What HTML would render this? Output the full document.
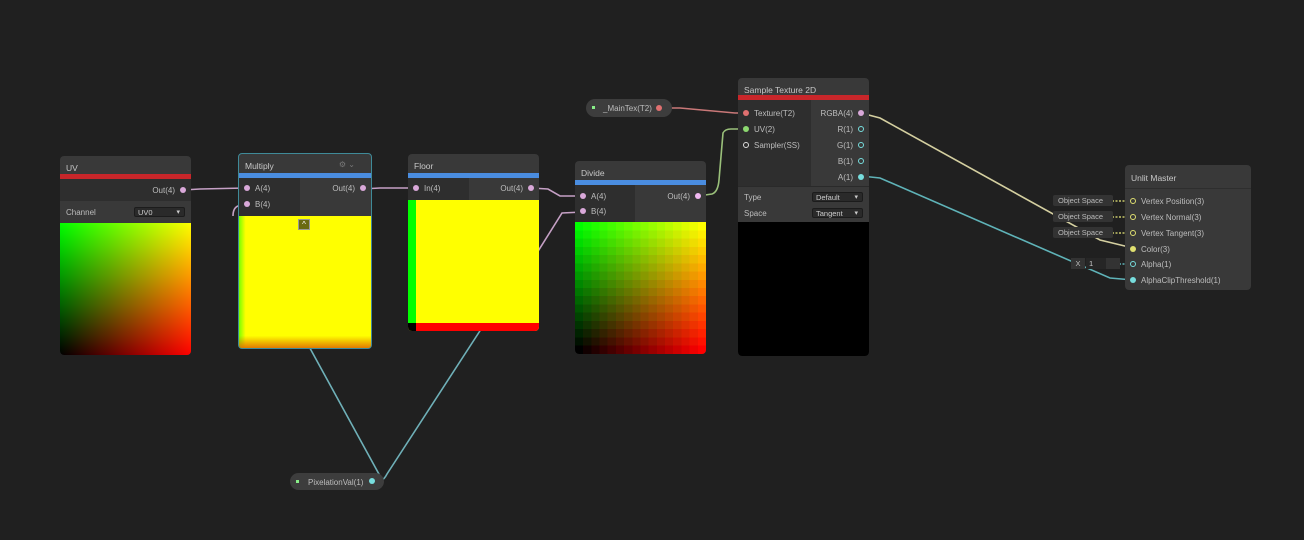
<!DOCTYPE html>
<html><head><meta charset="utf-8"><style>
*{margin:0;padding:0;box-sizing:border-box}
body{width:1304px;height:540px;background:#202020;position:relative;overflow:hidden;font-family:"Liberation Sans",sans-serif;font-size:8px;color:#c4c4c4}
.n{position:absolute;background:#393939;border-radius:4px;overflow:hidden}
.t{position:absolute;left:6px;font-size:8.5px;color:#c8c8c8}
.bar{position:absolute;left:0;right:0;height:5px}
.ports{position:absolute;background:#2e2e2e}
.lbl{position:absolute;font-size:8px;color:#bdbdbd;white-space:nowrap}
.dot{position:absolute;width:6px;height:6px;border-radius:50%}
.pv{position:absolute;left:0;right:0}
.dd{position:absolute;background:#2a2a2a;border:1px solid #1c1c1c;border-radius:2px;font-size:7.5px;color:#ccc;padding-left:3px;line-height:9px}
.dd:after{content:"▾";position:absolute;right:4px;top:0;font-size:7px}
.pill{position:absolute;background:#3d3d3d;border-radius:9px}
.os{position:absolute;background:#333;border-radius:2px;font-size:7.5px;color:#bbb;line-height:11px;padding-left:5px;width:60px;height:11px}
svg{position:absolute;left:0;top:0}
</style></head><body>
<svg width="1304" height="540" fill="none" stroke-width="1.6">
<path d="M183 190 L200 189 L246 188" stroke="#c5a0c5"/>
<path d="M246 205 L238 206 Q233 208 233 216" stroke="#c5a0c5"/>
<path d="M362 189 L380 188 L416 188" stroke="#c5a0c5"/>
<path d="M531 188 L548 189 L560 196 L583 196" stroke="#c5a0c5"/>
<path d="M520 280 L562 213 L583 212" stroke="#c5a0c5"/>
<path d="M698 196 L712 194 Q718 192 719 180 L723 133 Q725 129 731 129 L746 129" stroke="#9ac07a"/>
<path d="M659 108 L680 108 L735 113 L746 113" stroke="#c97878"/>
<path d="M861 113 L880 118 L1100 240 L1133 248" stroke="#d4cfa0"/>
<path d="M861 176 L880 178 L1110 278 L1133 280" stroke="#5fb3b8"/>
<path d="M372 481 L380 481 Q384 480 387 474 L500 300" stroke="#6fb0b8"/>
<path d="M372 481 L380 476 L300 330" stroke="#6fb0b8"/>
<path d="M1112 201 L1133 201 M1112 217 L1133 217 M1112 233 L1133 233" stroke="#c8c86a" stroke-dasharray="2 1.5"/>
<path d="M1112 264 L1133 264" stroke="#5fb3b8" stroke-dasharray="2 1.5"/>
</svg>

<!-- UV -->
<div class="n" style="left:60px;top:156px;width:131px;height:199px">
<div class="t" style="top:7px">UV</div>
<div class="bar" style="top:18px;background:#c8262a"></div>
<div class="ports" style="left:0;right:0;top:23px;height:22px;background:#2e2e2e"></div>
<div class="lbl" style="right:16px;top:30px">Out(4)</div>
<div class="dot" style="right:5px;top:31px;background:#d9a8d9"></div>
<div class="lbl" style="left:6px;top:52px">Channel</div>
<div class="dd" style="left:74px;top:51px;width:51px;height:10px">UV0</div>
<div class="pv" style="top:67px;height:132px;background:linear-gradient(to right,#000,#f00),linear-gradient(to top,#000,#0f0);background-blend-mode:screen"></div>
</div>

<!-- Multiply -->
<div class="n" style="left:238px;top:153px;width:134px;height:196px;border:1px solid #3f8a98">
<div class="t" style="top:7px">Multiply</div>
<div class="lbl" style="right:16px;top:6px;color:#777">⚙ ⌄</div>
<div class="bar" style="top:19px;background:#4a8de0"></div>
<div class="ports" style="left:0;width:61px;top:24px;height:38px"></div>
<div class="dot" style="left:5px;top:31px;background:#d9a8d9"></div><div class="lbl" style="left:16px;top:30px">A(4)</div>
<div class="dot" style="left:5px;top:47px;background:#d9a8d9"></div><div class="lbl" style="left:16px;top:46px">B(4)</div>
<div class="lbl" style="right:16px;top:30px">Out(4)</div>
<div class="dot" style="right:5px;top:31px;background:#d9a8d9"></div>
<div class="pv" style="top:62px;height:133px;background:linear-gradient(to bottom,rgba(0,0,0,0) 90%,#e07000 100%),linear-gradient(to right,#7f0 0,#ff0 5%,#ff0 100%)"></div>
<div style="position:absolute;left:59px;top:65px;width:12px;height:11px;background:#6a6a10;border:1px solid #999;color:#fff;font-size:8px;text-align:center;line-height:9px">^</div>
</div>

<!-- Floor -->
<div class="n" style="left:408px;top:154px;width:131px;height:177px">
<div class="t" style="top:7px">Floor</div>
<div class="bar" style="top:19px;background:#4a8de0"></div>
<div class="ports" style="left:0;width:61px;top:24px;height:22px"></div>
<div class="dot" style="left:5px;top:31px;background:#d9a8d9"></div><div class="lbl" style="left:16px;top:30px">In(4)</div>
<div class="lbl" style="right:16px;top:30px">Out(4)</div>
<div class="dot" style="right:5px;top:31px;background:#d9a8d9"></div>
<div class="pv" style="top:46px;height:131px;background:#ff0"></div>
<div style="position:absolute;left:0;top:46px;width:8px;height:123px;background:#0f0"></div>
<div style="position:absolute;left:8px;right:0;top:169px;height:8px;background:#f00"></div>
<div style="position:absolute;left:0;top:169px;width:8px;height:8px;background:#000"></div>
</div>

<!-- Divide -->
<div class="n" style="left:575px;top:161px;width:131px;height:193px">
<div class="t" style="top:7px">Divide</div>
<div class="bar" style="top:19px;background:#4a8de0"></div>
<div class="ports" style="left:0;width:60px;top:24px;height:37px"></div>
<div class="dot" style="left:5px;top:32px;background:#d9a8d9"></div><div class="lbl" style="left:16px;top:31px">A(4)</div>
<div class="dot" style="left:5px;top:47px;background:#d9a8d9"></div><div class="lbl" style="left:16px;top:46px">B(4)</div>
<div class="lbl" style="right:16px;top:31px">Out(4)</div>
<div class="dot" style="right:5px;top:32px;background:#f0b8f0"></div>
<div class="pv" style="top:61px;height:132px;background-color:#000;background-blend-mode:screen;background-image:
linear-gradient(to right,rgb(0,0,0) 0 6.25%,rgb(17,0,0) 6.25% 12.5%,rgb(34,0,0) 12.5% 18.75%,rgb(51,0,0) 18.75% 25%,rgb(68,0,0) 25% 31.25%,rgb(85,0,0) 31.25% 37.5%,rgb(102,0,0) 37.5% 43.75%,rgb(119,0,0) 43.75% 50%,rgb(136,0,0) 50% 56.25%,rgb(153,0,0) 56.25% 62.5%,rgb(170,0,0) 62.5% 68.75%,rgb(187,0,0) 68.75% 75%,rgb(204,0,0) 75% 81.25%,rgb(221,0,0) 81.25% 87.5%,rgb(238,0,0) 87.5% 93.75%,rgb(255,0,0) 93.75% 100%),
linear-gradient(to top,rgb(0,0,0) 0 6.25%,rgb(0,17,0) 6.25% 12.5%,rgb(0,34,0) 12.5% 18.75%,rgb(0,51,0) 18.75% 25%,rgb(0,68,0) 25% 31.25%,rgb(0,85,0) 31.25% 37.5%,rgb(0,102,0) 37.5% 43.75%,rgb(0,119,0) 43.75% 50%,rgb(0,136,0) 50% 56.25%,rgb(0,153,0) 56.25% 62.5%,rgb(0,170,0) 62.5% 68.75%,rgb(0,187,0) 68.75% 75%,rgb(0,204,0) 75% 81.25%,rgb(0,221,0) 81.25% 87.5%,rgb(0,238,0) 87.5% 93.75%,rgb(0,255,0) 93.75% 100%)"></div>
</div>

<!-- MainTex pill -->
<div class="pill" style="left:586px;top:99px;width:86px;height:18px">
<div style="position:absolute;left:6px;top:7px;width:3px;height:3px;background:#8e8"></div>
<div class="lbl" style="left:17px;top:5px">_MainTex(T2)</div>
<div class="dot" style="left:70px;top:6px;background:#e07070"></div>
</div>

<!-- Sample Texture 2D -->
<div class="n" style="left:738px;top:78px;width:131px;height:278px">
<div class="t" style="top:7px">Sample Texture 2D</div>
<div class="bar" style="top:17px;background:#c8262a"></div>
<div class="ports" style="left:0;width:73px;top:22px;height:86px"></div>
<div class="dot" style="left:5px;top:32px;background:#e07070"></div><div class="lbl" style="left:16px;top:31px">Texture(T2)</div>
<div class="dot" style="left:5px;top:48px;background:#8cd870"></div><div class="lbl" style="left:16px;top:47px">UV(2)</div>
<div class="dot" style="left:5px;top:64px;border:1px solid #ddd"></div><div class="lbl" style="left:16px;top:63px">Sampler(SS)</div>
<div class="lbl" style="right:16px;top:31px">RGBA(4)</div><div class="dot" style="right:5px;top:32px;background:#d9a8d9"></div>
<div class="lbl" style="right:16px;top:47px">R(1)</div><div class="dot" style="right:5px;top:48px;border:1px solid #7dd"></div>
<div class="lbl" style="right:16px;top:63px">G(1)</div><div class="dot" style="right:5px;top:64px;border:1px solid #7dd"></div>
<div class="lbl" style="right:16px;top:79px">B(1)</div><div class="dot" style="right:5px;top:80px;border:1px solid #7dd"></div>
<div class="lbl" style="right:16px;top:95px">A(1)</div><div class="dot" style="right:5px;top:96px;background:#7dd"></div>
<div style="position:absolute;left:0;right:0;top:108px;height:1px;background:#2a2a2a"></div>
<div class="lbl" style="left:6px;top:115px">Type</div>
<div class="dd" style="left:74px;top:114px;width:51px;height:10px">Default</div>
<div class="lbl" style="left:6px;top:131px">Space</div>
<div class="dd" style="left:74px;top:130px;width:51px;height:10px">Tangent</div>
<div class="pv" style="top:144px;height:134px;background:#000"></div>
</div>

<!-- Object space pills -->
<div class="os" style="left:1053px;top:195px">Object Space</div>
<div class="os" style="left:1053px;top:211px">Object Space</div>
<div class="os" style="left:1053px;top:227px">Object Space</div>
<div style="position:absolute;left:1071px;top:258px;width:14px;height:11px;background:#333;font-size:7.5px;color:#bbb;text-align:center;line-height:11px">X</div>
<div style="position:absolute;left:1086px;top:258px;width:20px;height:11px;background:#262626;font-size:7.5px;color:#ccc;line-height:11px;padding-left:3px">1</div>
<div style="position:absolute;left:1106px;top:258px;width:14px;height:11px;background:#333"></div>

<!-- Unlit Master -->
<div class="n" style="left:1125px;top:165px;width:126px;height:125px">
<div class="t" style="top:8px">Unlit Master</div>
<div style="position:absolute;left:0;right:0;top:23px;height:1px;background:#2e2e2e"></div>
<div class="dot" style="left:5px;top:33px;border:1px solid #e0e070"></div><div class="lbl" style="left:16px;top:32px">Vertex Position(3)</div>
<div class="dot" style="left:5px;top:49px;border:1px solid #e0e070"></div><div class="lbl" style="left:16px;top:48px">Vertex Normal(3)</div>
<div class="dot" style="left:5px;top:65px;border:1px solid #e0e070"></div><div class="lbl" style="left:16px;top:64px">Vertex Tangent(3)</div>
<div class="dot" style="left:5px;top:81px;background:#e0e070"></div><div class="lbl" style="left:16px;top:80px">Color(3)</div>
<div class="dot" style="left:5px;top:96px;border:1px solid #7dd"></div><div class="lbl" style="left:16px;top:95px">Alpha(1)</div>
<div class="dot" style="left:5px;top:112px;background:#7dd"></div><div class="lbl" style="left:16px;top:111px">AlphaClipThreshold(1)</div>
</div>

<!-- Pixelation pill -->
<div class="pill" style="left:290px;top:473px;width:94px;height:17px">
<div style="position:absolute;left:6px;top:7px;width:3px;height:3px;background:#8e8"></div>
<div class="lbl" style="left:18px;top:5px">PixelationVal(1)</div>
<div class="dot" style="left:79px;top:5px;background:#7dd"></div>
</div>
</body></html>
